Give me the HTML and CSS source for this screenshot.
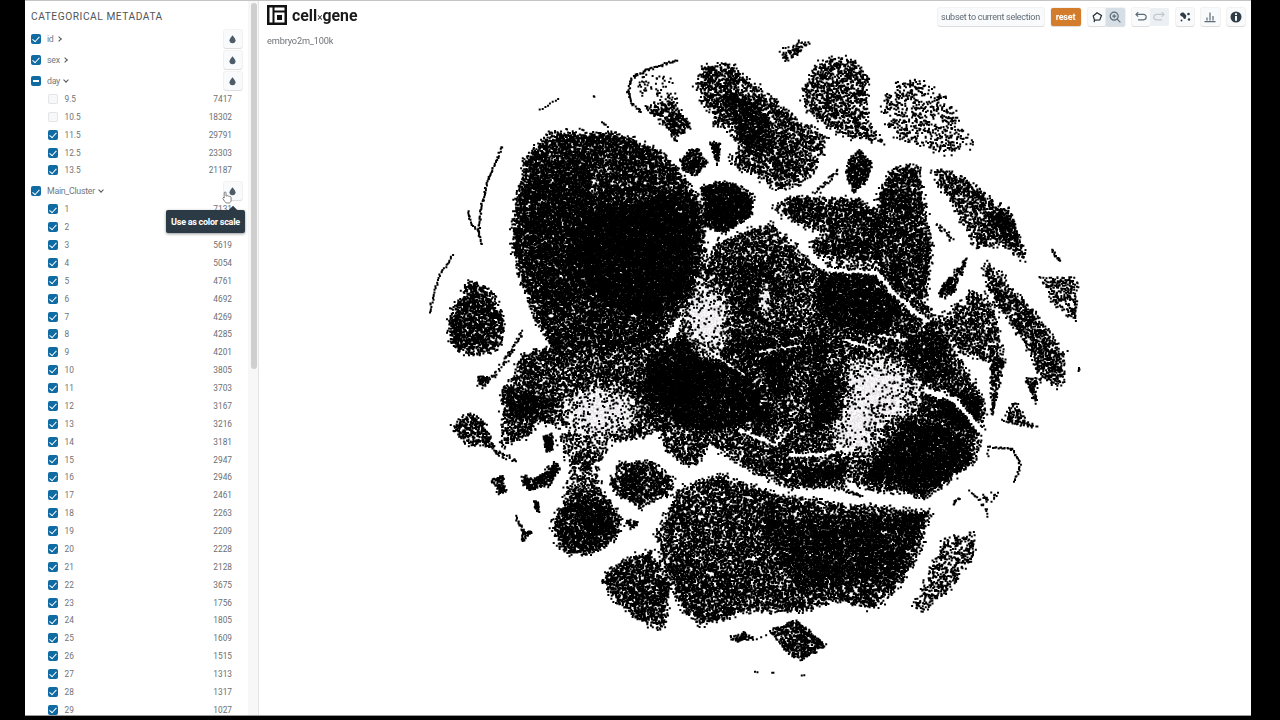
FILE: index.html
```html
<!DOCTYPE html>
<html lang="en">
<head>
<meta charset="utf-8">
<title>cellxgene</title>
<link rel="stylesheet" href="styles.css">
</head>
<body>
<div class="stage">
  <aside class="sidebar">
    <div class="list">
      <h2 class="heading">CATEGORICAL METADATA</h2>
      <div class="cat"><span class="cb on"></span><span class="name">id</span><span class="chev right"></span><button class="drop"><svg viewBox="0 0 12 12"><path d="M6 1C6 1 2 5.6 2 7.8a4 4 0 0 0 8 0C10 5.6 6 1 6 1z"/></svg></button></div>
      <div class="cat"><span class="cb on"></span><span class="name">sex</span><span class="chev right"></span><button class="drop"><svg viewBox="0 0 12 12"><path d="M6 1C6 1 2 5.6 2 7.8a4 4 0 0 0 8 0C10 5.6 6 1 6 1z"/></svg></button></div>
      <div class="cat"><span class="cb mixed"></span><span class="name">day</span><span class="chev down"></span><button class="drop"><svg viewBox="0 0 12 12"><path d="M6 1C6 1 2 5.6 2 7.8a4 4 0 0 0 8 0C10 5.6 6 1 6 1z"/></svg></button></div>
      <div class="sub"><span class="cb off"></span><span class="label">9.5</span><span class="count">7417</span></div>
      <div class="sub"><span class="cb off"></span><span class="label">10.5</span><span class="count">18302</span></div>
      <div class="sub"><span class="cb on"></span><span class="label">11.5</span><span class="count">29791</span></div>
      <div class="sub"><span class="cb on"></span><span class="label">12.5</span><span class="count">23303</span></div>
      <div class="sub"><span class="cb on"></span><span class="label">13.5</span><span class="count">21187</span></div>
      <div class="cat"><span class="cb on"></span><span class="name">Main_Cluster</span><span class="chev down"></span><button class="drop"><svg viewBox="0 0 12 12"><path d="M6 1C6 1 2 5.6 2 7.8a4 4 0 0 0 8 0C10 5.6 6 1 6 1z"/></svg></button></div>
      <div class="sub"><span class="cb on"></span><span class="label">1</span><span class="count">7131</span></div>
      <div class="sub"><span class="cb on"></span><span class="label">2</span><span class="count">6102</span></div>
      <div class="sub"><span class="cb on"></span><span class="label">3</span><span class="count">5619</span></div>
      <div class="sub"><span class="cb on"></span><span class="label">4</span><span class="count">5054</span></div>
      <div class="sub"><span class="cb on"></span><span class="label">5</span><span class="count">4761</span></div>
      <div class="sub"><span class="cb on"></span><span class="label">6</span><span class="count">4692</span></div>
      <div class="sub"><span class="cb on"></span><span class="label">7</span><span class="count">4269</span></div>
      <div class="sub"><span class="cb on"></span><span class="label">8</span><span class="count">4285</span></div>
      <div class="sub"><span class="cb on"></span><span class="label">9</span><span class="count">4201</span></div>
      <div class="sub"><span class="cb on"></span><span class="label">10</span><span class="count">3805</span></div>
      <div class="sub"><span class="cb on"></span><span class="label">11</span><span class="count">3703</span></div>
      <div class="sub"><span class="cb on"></span><span class="label">12</span><span class="count">3167</span></div>
      <div class="sub"><span class="cb on"></span><span class="label">13</span><span class="count">3216</span></div>
      <div class="sub"><span class="cb on"></span><span class="label">14</span><span class="count">3181</span></div>
      <div class="sub"><span class="cb on"></span><span class="label">15</span><span class="count">2947</span></div>
      <div class="sub"><span class="cb on"></span><span class="label">16</span><span class="count">2946</span></div>
      <div class="sub"><span class="cb on"></span><span class="label">17</span><span class="count">2461</span></div>
      <div class="sub"><span class="cb on"></span><span class="label">18</span><span class="count">2263</span></div>
      <div class="sub"><span class="cb on"></span><span class="label">19</span><span class="count">2209</span></div>
      <div class="sub"><span class="cb on"></span><span class="label">20</span><span class="count">2228</span></div>
      <div class="sub"><span class="cb on"></span><span class="label">21</span><span class="count">2128</span></div>
      <div class="sub"><span class="cb on"></span><span class="label">22</span><span class="count">3675</span></div>
      <div class="sub"><span class="cb on"></span><span class="label">23</span><span class="count">1756</span></div>
      <div class="sub"><span class="cb on"></span><span class="label">24</span><span class="count">1805</span></div>
      <div class="sub"><span class="cb on"></span><span class="label">25</span><span class="count">1609</span></div>
      <div class="sub"><span class="cb on"></span><span class="label">26</span><span class="count">1515</span></div>
      <div class="sub"><span class="cb on"></span><span class="label">27</span><span class="count">1313</span></div>
      <div class="sub"><span class="cb on"></span><span class="label">28</span><span class="count">1317</span></div>
      <div class="sub"><span class="cb on"></span><span class="label">29</span><span class="count">1027</span></div>
    </div>
    <div class="track"><div class="thumb"></div></div>
    <div class="tooltip">Use as color scale</div>
    <svg class="cursor" viewBox="0 0 12 14"><path d="M3.5 6V2a1 1 0 0 1 2 0v3.4h.6a1 1 0 0 1 1.8.3 1 1 0 0 1 1.7.4c.9-.2 1.4.3 1.4 1V10c0 1.700-1 3-2.500 3H6.500C5.400 13 4.800 12.400 4.200 11.500L2.100 8.400C1.500 7.300 2.700 6.500 3.500 7.500z"/></svg>
  </aside>
  <main class="main">
    <canvas id="plot" class="plot" width="992" height="715"></canvas>
    <div class="top">
      <div class="brand">
        <div class="identity">
          <svg class="logo" viewBox="0 0 20 20"><path d="M0 0h20v20H0zM2.500 2.500v15h3v-15zM7.500 2.500v3h10v-3zM7.500 7.500v10h10v-10zM10 10h5v5h-5z" fill-rule="evenodd"/></svg>
          <span class="wordmark">cell<small>×</small>gene</span>
        </div>
        <div class="dataset">embryo2m_100k</div>
      </div>
      <div class="tools">
        <button class="btn text">subset to current selection</button>
        <button class="btn reset">reset</button>
        <div class="group">
          <button class="btn icon"><svg viewBox="0 0 12 12"><path class="ln dark" d="M2.200 5 6 1.800 10.500 4.500 8.800 9 3.500 9.200zM3.500 9.200l-.4 2"/></svg></button>
          <button class="btn icon active"><svg viewBox="0 0 12 12"><circle class="ln" cx="5.200" cy="5.200" r="4"/><path class="ln" d="M8.200 8.200l3.200 3.200M3.200 5.200h4M5.200 3.200v4"/></svg></button>
        </div>
        <div class="group">
          <button class="btn icon"><svg viewBox="0 0 12 12"><path class="ln" d="M3.200 1.200 1 3.400l2.200 2.200M1 3.400h7.500a2.600 2.600 0 0 1 0 5.400H3"/></svg></button>
          <button class="btn icon off"><svg viewBox="0 0 12 12"><path class="ln" d="M8.800 1.200 11 3.400 8.800 5.600M11 3.400H3.500a2.600 2.600 0 0 0 0 5.400H9"/></svg></button>
        </div>
        <button class="btn icon solo"><svg viewBox="0 0 12 12"><path class="fill" d="M1.500 2.500c1.500-1.500 3.500-1 4.300.2.700 1.100 2 1.300 1.400 2.800-.5 1.400-.3 2.700-1.700 2.600C4 8 4.500 6 3 5.600 1.500 5.200.5 3.600 1.500 2.500z"/><circle class="fill" cx="9.500" cy="3" r="1.300"/><circle class="fill" cx="10" cy="8.500" r="1.200"/><circle class="fill" cx="2.500" cy="9.500" r=".9"/></svg></button>
        <button class="btn icon solo"><svg viewBox="0 0 12 12"><path class="ln" d="M.5 10.700h11M3 9.500V6.500M6 9.500V1.500M9 9.500V5"/></svg></button>
        <button class="btn icon solo"><svg viewBox="0 0 12 12"><path class="fill" fill-rule="evenodd" d="M6 .5a5.500 5.500 0 1 0 0 11 5.500 5.500 0 0 0 0-11zM5 2.200h2v1.800H5zM5 5h2v4.800H5z"/></svg></button>
      </div>
    </div>
  </main>
</div>
<script src="plot.js"></script>
</body>
</html>
```
FILE: styles.css
```css
* { box-sizing: border-box; }
html, body { height: 100%; }
body { margin: 0; background: #000; overflow: hidden; font-family: Roboto, "Liberation Sans", sans-serif; color: #6b6f73; }
button { font: inherit; padding: 0; margin: 0; border: 0; }

.stage { margin: 0 29px 0 25px; height: 716px; background: #fff; border-top: 1px solid #c4c4c4; border-bottom: 1px solid #999; display: flex; filter: blur(.4px); }

.sidebar { position: relative; width: 234px; flex: none; display: flex; border-right: 1px solid #e4e4e4; overflow: hidden; }
.list { flex: 1; min-width: 0; overflow: hidden; padding-left: 6px; }
.heading { margin: 0; height: 26px; padding-top: 9px; font-size: 10.200px; line-height: 13px; font-weight: 400; letter-spacing: .55px; color: #50555a; white-space: nowrap; }

.cat { display: flex; align-items: center; height: 17.900px; margin-top: 3.100px; font-size: 8.800px; letter-spacing: -.28px; color: #74787c; }
.name { margin-left: 6px; }
.sub { display: flex; align-items: center; height: 17.880px; padding-left: 17px; font-size: 8.300px; color: #6f7377; }
.label { margin-left: 6.500px; }
.count { margin-left: auto; width: 50px; text-align: right; margin-right: 16px; color: #6b6f73; }

.cb { position: relative; width: 10px; height: 10px; flex: none; border-radius: 2px; background: #106ba3; }
.cb.on::after { content: ""; position: absolute; left: 3.400px; top: 1.300px; width: 3.200px; height: 5.800px; border: solid #fff; border-width: 0 1.500px 1.500px 0; transform: rotate(42deg); }
.cb.mixed::after { content: ""; position: absolute; left: 2px; top: 4px; width: 6px; height: 2px; background: #fff; }
.cb.off { background: #f6f8fa; box-shadow: inset 0 0 0 1px #e3e6e9; }

.chev { width: 4px; height: 4px; margin-left: 4px; border: solid #555; border-width: 0 1px 1px 0; }
.chev.right { transform: rotate(-45deg); margin-left: 3px; }
.chev.down { transform: translateY(-1px) rotate(45deg); }

.drop { margin-left: auto; margin-right: 6.500px; width: 18px; height: 18px; display: flex; align-items: center; justify-content: center; background: #f9fafb; border-radius: 2px; box-shadow: 0 0 0 1px rgba(16,22,26,.05), 0 1px 1px rgba(16,22,26,.1); }
.drop svg { width: 9px; height: 10px; fill: #4d5c68; }

.track { width: 10px; flex: none; background: #f7f7f7; padding: 2px 1.500px 0 3px; }
.thumb { height: 366px; background: #cfcfcf; border-radius: 3px; }

.tooltip { position: absolute; left: 141px; top: 209px; width: 79px; height: 23px; display: flex; align-items: center; justify-content: center; background: #2c3a46; color: #fff; border-radius: 2px; font-size: 9px; letter-spacing: -.26px; font-weight: 700; box-shadow: 0 1px 3px rgba(16,22,26,.45); white-space: nowrap; }
.tooltip::before { content: ""; position: absolute; right: 9px; top: -3px; width: 6px; height: 6px; background: #2c3a46; transform: rotate(45deg); }
.cursor { position: absolute; left: 196px; top: 190px; width: 11px; height: 13px; fill: #fff; stroke: #555; stroke-width: .8px; }

.main { position: relative; flex: 1; min-width: 0; display: grid; }
.plot { grid-area: 1 / 1; width: 992px; height: 715px; display: block; }
.top { grid-area: 1 / 1; position: relative; display: flex; justify-content: space-between; align-items: flex-start; padding: 4px 6px 0 8px; pointer-events: none; }

.identity { display: flex; align-items: center; gap: 5px; height: 20px; }
.logo { width: 20px; height: 20px; fill: #111; }
.wordmark { padding-top: 3px; font-size: 15.800px; line-height: 20px; font-weight: 700; color: #1a1a1a; }
.wordmark small { font-size: 10px; font-weight: 400; }
.dataset { margin-top: 10px; font-size: 9.200px; letter-spacing: -.15px; line-height: 12px; color: #6f7377; }

.tools { display: flex; align-items: center; gap: 7px; margin-top: 3px; }
.group { display: flex; }
.btn { height: 18px; display: flex; align-items: center; justify-content: center; border-radius: 2px; background: #f9fafb; color: #5f6b75; box-shadow: 0 0 0 1px rgba(16,22,26,.05), 0 1px 1px rgba(16,22,26,.1); }
.btn.text { width: 106px; font-size: 9px; letter-spacing: -.28px; }
.btn.reset { width: 30px; background: #d27c2c; color: #fff; font-weight: 700; font-size: 9px; letter-spacing: -.2px; }
.btn.icon { width: 18.500px; }
.btn.active { background: #d6dfe6; }
.btn.off { background: #edf0f3; box-shadow: none; }
.btn.off .ln { stroke: #bfc8d0; }
.btn svg { width: 12px; height: 12px; }
.ln { fill: none; stroke: #5c6b77; stroke-width: 1.200px; }
.ln.dark { stroke: #222b33; }
.fill { fill: #2f3d49; }
```
FILE: plot.js
```js
(function () {
  var canvas = document.getElementById('plot');
  var ctx = canvas.getContext('2d');
  var OX = 259, OY = 1;
  ctx.translate(-OX, -OY);

  var seed = 20190;
  function rnd() {
    seed |= 0; seed = seed + 0x6D2B79F5 | 0;
    var t = Math.imul(seed ^ seed >>> 15, 1 | seed);
    t = t + Math.imul(t ^ t >>> 7, 61 | t) ^ t;
    return ((t ^ t >>> 14) >>> 0) / 4294967296;
  }
  function gauss() { return (rnd() + rnd() + rnd() - 1.5) / 0.5; }

  /* thin channels: x1,y1,x2,y2,half-width */
  var voids = [
    [800,247,827,270,3], [827,270,877,273,2.500], [877,273,893,293,2.500], [893,293,925,320,2.500],
    [700,345,745,375,1.200], [760,352,800,345,1.200],
    [790,455,820,455,2], [820,455,860,445,2],
    [925,390,955,400,3.500], [955,400,985,435,3.500],
    [740,430,775,445,2], [775,445,795,425,1.500],
    [880,335,905,340,1.500], [845,340,880,350,1.500]
  ];
  /* thinned patches: cx,cy,rx,ry */
  var hazes = [
    [708,318,25,44], [878,392,46,38], [855,432,28,26], [600,412,42,28], [765,300,7,20]
  ];

  function keep(x, y) {
    var i, v, h, d;
    for (i = 0; i < voids.length; i++) {
      v = voids[i];
      var dx = v[2] - v[0], dy = v[3] - v[1];
      var t = Math.max(0, Math.min(1, ((x - v[0]) * dx + (y - v[1]) * dy) / (dx * dx + dy * dy)));
      d = Math.hypot(x - v[0] - t * dx, y - v[1] - t * dy);
      if (d < v[4] * (.5 + rnd())) return false;
    }
    for (i = 0; i < hazes.length; i++) {
      h = hazes[i];
      d = Math.hypot((x - h[0]) / h[2], (y - h[1]) / h[3]);
      if (d < 1 && rnd() < .93 * Math.pow(1 - d * d, .4)) return false;
    }
    return true;
  }

  function inside(p, x, y) {
    var c = false;
    for (var i = 0, j = p.length - 2; i < p.length; j = i, i += 2) {
      if ((p[i + 1] > y) !== (p[j + 1] > y) &&
          x < (p[j] - p[i]) * (y - p[i + 1]) / (p[j + 1] - p[i + 1]) + p[i]) c = !c;
    }
    return c;
  }
  function blob(p, density, jitter) {
    var x0 = 1e9, x1 = -1e9, y0 = 1e9, y1 = -1e9, i;
    for (i = 0; i < p.length; i += 2) {
      x0 = Math.min(x0, p[i]); x1 = Math.max(x1, p[i]);
      y0 = Math.min(y0, p[i + 1]); y1 = Math.max(y1, p[i + 1]);
    }
    var n = (x1 - x0) * (y1 - y0) * density * 1.45;
    var j = jitter === undefined ? 2.200 : jitter;
    ctx.beginPath();
    for (i = 0; i < n; i++) {
      var x = x0 + rnd() * (x1 - x0), y = y0 + rnd() * (y1 - y0);
      if (!inside(p, x, y)) continue;
      x += gauss() * j; y += gauss() * j;
      if (!keep(x, y)) continue;
      ctx.rect(x - 1, y - 1, 2, 2);
    }
    ctx.fill();
  }
  function line(p, step, spread) {
    ctx.beginPath();
    for (var i = 0; i < p.length - 2; i += 2) {
      var dx = p[i + 2] - p[i], dy = p[i + 3] - p[i + 1], len = Math.hypot(dx, dy);
      for (var d = 0; d < len; d += step) {
        var x = p[i] + dx * d / len + gauss() * spread, y = p[i + 1] + dy * d / len + gauss() * spread;
        ctx.rect(x - 1, y - 1, 2, 2);
      }
    }
    ctx.fill();
  }
  function paleDots() {
    var cols = ['#e4e1e6', '#eeecef', '#dad6dc', '#f3f2f4'];
    for (var k = 0; k < hazes.length; k++) {
      var h = hazes[k], n = h[2] * h[3] * 2.500;
      for (var i = 0; i < n; i++) {
        var a = rnd() * 6.283, r = Math.sqrt(rnd());
        if (rnd() < r * r) continue;
        ctx.fillStyle = cols[i % 4];
        ctx.fillRect(h[0] + Math.cos(a) * r * h[2], h[1] + Math.sin(a) * r * h[3], 1.2, 1.2);
      }
    }
  }

  paleDots();
  ctx.fillStyle = '#000';

  /* large centre mass */
  blob([690,290, 718,240, 770,225, 812,262, 880,268, 930,310, 965,370, 985,405, 975,460, 925,495, 870,490, 845,478, 790,488, 750,470, 715,445, 660,420, 640,392, 650,360, 680,335], .3);
  blob([505,395, 522,355, 560,345, 620,340, 690,340, 700,400, 655,412, 650,435, 615,440, 570,430, 540,420, 515,420], .3);

  /* dark sub-masses */
  blob([653,375, 690,355, 745,370, 762,395, 745,425, 700,432, 665,415], .4);
  blob([823,275, 870,272, 900,310, 885,332, 835,328, 815,300], .35);
  blob([808,385, 835,372, 853,385, 840,420, 815,432], .42);
  blob([760,360, 785,355, 788,395, 775,397], .4);
  blob([750,398, 772,410, 770,428, 750,420], .4);
  blob([800,470, 845,465, 845,487, 802,486], .35);
  blob([935,400, 955,392, 980,400, 978,432, 950,425], .5);
  blob([885,450, 905,425, 940,425, 970,450, 972,462, 925,497, 890,480, 865,480], .4);
  blob([700,280, 760,262, 790,285, 760,320, 720,310], .15);
  blob([720,350, 760,335, 790,345, 770,365], .2);
  blob([780,330, 830,335, 825,365, 785,360], .2);
  blob([905,335, 945,335, 955,375, 925,385, 905,360], .2);
  blob([503,387, 540,397, 535,430, 503,447], .3);

  /* main large cluster */
  blob([527,157, 553,132, 620,135, 663,153, 697,197, 705,247, 690,300, 660,340, 607,346, 553,348, 530,307, 513,247, 517,197], .42);
  blob([590,210, 660,200, 697,230, 690,290, 650,320, 600,300, 575,250], .4);
  blob([530,175, 590,165, 600,280, 560,320, 530,280], .12);
  blob([703,186, 730,182, 753,197, 750,215, 725,232, 705,225], .7, 1.5);
  blob([640,180, 695,200, 710,235, 680,220], .2);

  /* upper clusters */
  blob([780,52, 800,41, 811,42, 800,54, 785,62], .18, 1);
  blob([811,70, 827,58, 853,60, 868,77, 866,118, 880,142, 850,137, 817,120, 802,100], .22);
  blob([870,125, 888,148, 876,136], .4, 1);
  blob([897,82, 917,80, 947,100, 973,143, 950,155, 900,140, 882,117, 883,100], .1, 2);
  blob([703,65, 730,65, 757,87, 797,120, 827,138, 810,177, 783,190, 750,173, 727,160, 745,147, 713,120, 697,87], .26);
  blob([720,90, 760,105, 775,150, 745,150], .3);
  blob([848,160, 860,150, 872,165, 868,180, 853,192, 846,175], .45, 1);
  line([838,170, 825,185, 815,193], 1, 1.3);
  blob([773,207, 793,198, 833,200, 860,200, 880,217, 877,197, 893,170, 918,165, 925,217, 932,247, 925,300, 897,287, 877,263, 843,260, 813,253, 813,243, 827,233, 793,220], .38);
  blob([933,168, 963,177, 1010,213, 1027,262, 1003,243, 977,247, 957,210, 940,187], .25);
  blob([985,215, 1010,215, 1025,258, 1005,240], .3);
  line([937,225, 953,240], 1, 1.4);
  blob([938,292, 968,257, 955,290, 945,298], .45, .8);
  blob([982,262, 1000,275, 1040,320, 1063,355, 1063,385, 1040,380, 1030,350, 1010,320, 990,295], .28);
  blob([1038,277, 1078,278, 1075,310, 1075,322, 1055,305], .18, 1);
  blob([935,322, 975,292, 992,300, 1003,365, 960,352], .25);
  line([1052,250, 1060,262], 1, .7);
  blob([990,355, 1005,360, 992,418], .34, 1);
  blob([1025,378, 1037,378, 1036,405], .34, .8);
  blob([1002,420, 1015,400, 1025,420, 1038,427, 1015,425], .22, 1);

  /* arcs and hooks at the left */
  line([502,147, 488,180, 481,207, 479,235, 482,245], 1.5, .5);
  line([453,255, 440,275, 431,305, 430,313], 2, .5);
  line([468,212, 472,226, 480,232], 1.5, .6);
  line([540,110, 560,98], 3, .5);
  line([593,97, 595,97], 1, .5);
  line([602,123, 608,127], 1.500, .5);
  line([677,60, 645,71, 632,78, 628,92, 632,104, 642,112], 1.2, .6);
  blob([640,75, 672,74, 680,105, 640,105], .04, 1);
  blob([645,108, 672,100, 690,125, 675,142, 670,130], .3, 1.5);
  blob([680,160, 695,147, 707,162, 695,176, 682,170], .5, 1);
  blob([710,143, 720,143, 718,167], .6, .6);
  blob([450,318, 470,282, 490,290, 505,322, 498,350, 470,355, 452,345], .38);
  line([508,357, 522,332], 1, 1.3);

  /* lower-left clusters */
  blob([450,428, 470,412, 487,425, 493,447, 470,445], .26, 1.5);
  line([478,385, 495,375, 510,355], 1.2, 1.8);
  blob([478,376, 490,378, 482,388], .6, 1);
  blob([490,445, 520,462, 500,458], .2, 1);
  blob([543,437, 552,433, 553,450, 546,453], .7, .5);
  blob([523,475, 535,480, 555,462, 560,468, 550,485, 530,490, 523,485], .5, .8);
  blob([492,478, 503,476, 506,492, 498,493], .45, .8);
  blob([534,500, 539,503, 539,512, 535,510], .7, .4);
  line([516,517, 524,533, 531,532, 522,541, 524,533], .8, .8);
  blob([565,432, 600,435, 610,445, 590,470, 570,465, 558,440], .18);
  blob([575,455, 600,455, 598,490, 565,490], .14);
  blob([570,490, 600,490, 622,520, 615,540, 585,555, 560,550, 553,525], .38);
  blob([580,500, 615,510, 610,535, 585,540], .25);
  blob([622,462, 650,462, 672,478, 668,495, 640,507, 620,495, 610,482], .38);
  blob([652,412, 680,432, 710,440, 700,460, 690,467, 670,455, 655,430], .3, 1.5);
  blob([625,520, 640,522, 630,530], .3, 1);
  blob([603,577, 625,560, 650,552, 668,575, 670,590, 662,628, 640,620, 615,600], .36);

  /* bottom big cluster */
  blob([657,535, 680,490, 720,475, 760,490, 800,500, 845,505, 930,512, 920,550, 900,585, 882,602, 870,608, 840,600, 800,610, 750,610, 700,625, 680,605, 665,570], .32);
  blob([760,520, 850,520, 925,515, 895,580, 800,590], .25);
  blob([770,632, 795,620, 827,645, 800,660, 785,650], .34, 1);
  blob([730,637, 745,632, 753,638, 738,642], .4, .6);
  line([752,640, 770,634], 5, .8);
  line([755,672, 759,672], 2.5, .3);
  line([772,673, 775,673], 1.5, .3);
  line([802,675, 807,675], 2.5, .3);
  blob([912,608, 930,570, 945,538, 975,533, 975,555, 950,590, 925,610], .16, 1.4);

  /* streaks and specks to the right */
  line([838,488, 863,497], 1, 1);
  line([952,505, 960,497], 1, 1);
  line([988,447, 1012,449, 1020,462, 1019,472, 1014,482], 1.5, .6);
  line([970,492, 982,503, 988,516], 2, 1.3);
  line([1079,368, 1079,372], 1, .4);
  line([988,450, 989,458], 3, .5);
  blob([975,492, 1000,485, 995,505], .05, 1);
})();
```
